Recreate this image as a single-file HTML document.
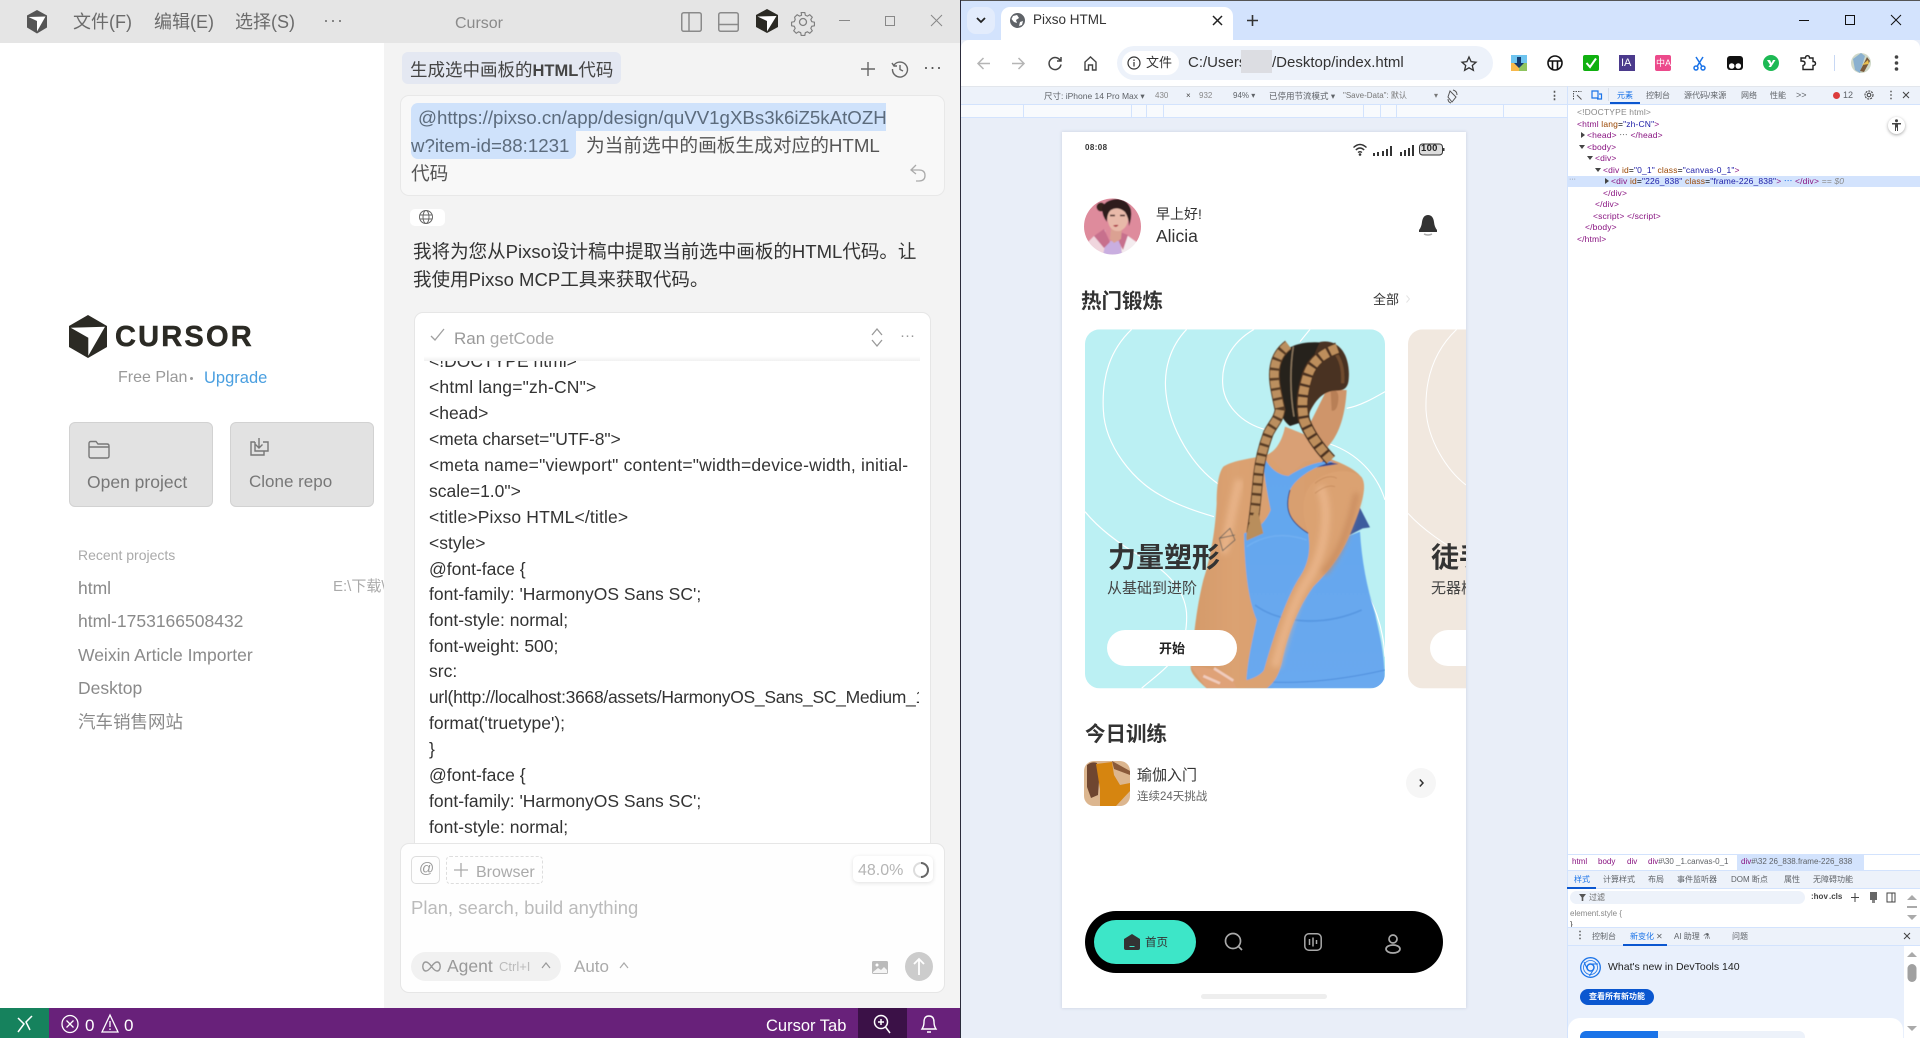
<!DOCTYPE html>
<html lang="zh-CN"><head><meta charset="utf-8"><title>Cursor and Pixso HTML</title>
<style>
*{box-sizing:border-box}
html,body{margin:0;padding:0;width:1920px;height:1038px;overflow:hidden;background:#fff;font-family:"Liberation Sans","Noto Sans CJK SC",sans-serif}
.b{position:absolute}
.t{position:absolute;white-space:nowrap;line-height:20px;height:20px;margin-top:-10px}
svg{position:absolute;overflow:visible}
.code .t{font-size:17.5px;color:#333;left:0}
.el .t{font-size:8.5px;letter-spacing:.15px}
.tg{color:#881280}.an{color:#994500}.av{color:#1a1aa6}
.dt .t{font-size:8px;color:#5f6368}
</style></head><body>

<!-- ================= LEFT WINDOW ================= -->
<div class="b" style="left:0;top:0;width:960px;height:43px;background:#e5e5e5"></div>
<div class="b" style="left:0;top:43px;width:384px;height:965px;background:#fff"></div>
<div class="b" style="left:384px;top:43px;width:576px;height:965px;background:#f3f3f3"></div>

<svg style="left:26px;top:10px" width="22" height="24" viewBox="0 0 22 24"><path d="M11 0L21 5.500V17.500L11 23.500L1 17.500V5.500Z" fill="#555"/><path d="M2.500 7L19.500 6.500L11 21.500V11Z" fill="#fff"/></svg>
<div class="t" style="left:73px;top:22px;font-size:18px;color:#6b6b6b">文件(F)</div>
<div class="t" style="left:154px;top:22px;font-size:18px;color:#6b6b6b">编辑(E)</div>
<div class="t" style="left:235px;top:22px;font-size:18px;color:#6b6b6b">选择(S)</div>
<div class="t" style="left:323px;top:20px;font-size:18px;color:#777;letter-spacing:1px">···</div>
<div class="t" style="left:455px;top:24px;font-size:16px;color:#8a8a8a">Cursor</div>

<svg style="left:681px;top:12px" width="21" height="20" fill="none" stroke="#8a8a8a" stroke-width="1.500"><rect x=".75" y=".75" width="19.500" height="18.500" rx="2"/><path d="M8 1V19"/></svg>
<svg style="left:718px;top:12px" width="21" height="20" fill="none" stroke="#8a8a8a" stroke-width="1.500"><rect x=".75" y=".75" width="19.500" height="18.500" rx="2"/><path d="M1 12.500H20"/></svg>
<svg style="left:756px;top:9px" width="22" height="24"><path d="M11 0L22 6V18L11 24L0 18V6Z" fill="#2b2a24"/><path d="M1.500 7.500L20.500 7L11 22.500V12Z" fill="#fff"/></svg>
<svg style="left:791px;top:10px" width="24" height="24" viewBox="0 0 24 24" fill="none" stroke="#808080" stroke-width="1.300"><circle cx="12" cy="12" r="3.500"/><path d="M10 1.500h4l.6 3 2.300 1 2.600-1.600 2.800 2.800-1.600 2.600 1 2.300 3 .6v4l-3 .6-1 2.300 1.600 2.600-2.800 2.800-2.600-1.600-2.300 1-.6 3h-4l-.6-3-2.300-1-2.600 1.600-2.800-2.800 1.600-2.600-1-2.300-3-.6v-4l3-.6 1-2.300L2.700 6.700l2.800-2.800 2.600 1.600 2.300-1z" transform="translate(1.200 1.200) scale(.9)"/></svg>
<div class="b" style="left:839px;top:20px;width:11px;height:1px;background:#888"></div>
<div class="b" style="left:885px;top:16px;width:10px;height:10px;border:1px solid #888"></div>
<svg style="left:931px;top:15px" width="11" height="11" stroke="#888" stroke-width="1"><path d="M0 0L11 11M11 0L0 11"/></svg>

<!-- sidebar -->
<svg style="left:69px;top:315px" width="38" height="43" viewBox="69 315 38 43"><path d="M88 315L107 326V347L88 358L69 347V326Z" fill="#2b2a24"/><path d="M70.700 327.700L105 326.700L88.300 355.700V337.700Z" fill="#fff"/></svg>
<div class="t" style="left:115px;top:337px;font-size:29px;font-weight:700;color:#2b2a24;letter-spacing:2.200px;-webkit-text-stroke:.5px #2b2a24">CURSOR</div>
<div class="t" style="left:118px;top:378px;font-size:16px;color:#999">Free Plan</div>
<div class="b" style="left:190px;top:377px;width:3px;height:3px;border-radius:50%;background:#999"></div>
<div class="t" style="left:204px;top:378px;font-size:16.500px;color:#4a9fe0">Upgrade</div>

<div class="b" style="left:69px;top:422px;width:144px;height:85px;background:#e2e2e2;border:1px solid #d2d2d2;border-radius:6px"></div>
<div class="b" style="left:230px;top:422px;width:144px;height:85px;background:#e2e2e2;border:1px solid #d2d2d2;border-radius:6px"></div>
<svg style="left:88px;top:440px" width="22" height="20" fill="none" stroke="#777" stroke-width="1.400"><path d="M1 3.500Q1 1.500 3 1.500H8L10 4H19Q21 4 21 6V16Q21 18 19 18H3Q1 18 1 16ZM1 7H21"/></svg>
<svg style="left:249px;top:437px" width="21" height="24" fill="none" stroke="#777" stroke-width="1.400"><path d="M6 5H2V18H15V14M6 5V14H15M15 14H19V5H14"/><path d="M10 1V11M6.500 7.500L10 11L13.500 7.500"/></svg>
<div class="t" style="left:87px;top:482px;font-size:17.500px;color:#777">Open project</div>
<div class="t" style="left:249px;top:482px;font-size:17px;color:#777">Clone repo</div>

<div class="t" style="left:78px;top:555px;font-size:14px;color:#aaa">Recent projects</div>
<div class="t" style="left:78px;top:588px;font-size:17.5px;color:#8a8a8a">html</div>
<div class="t" style="left:78px;top:621px;font-size:17.5px;color:#8a8a8a">html-1753166508432</div>
<div class="t" style="left:78px;top:655px;font-size:17.5px;color:#8a8a8a">Weixin Article Importer</div>
<div class="t" style="left:78px;top:688px;font-size:17.5px;color:#8a8a8a">Desktop</div>
<div class="t" style="left:78px;top:722px;font-size:17.5px;color:#8a8a8a">汽车销售网站</div>
<div class="b" style="left:333px;top:575px;width:51px;height:24px;overflow:hidden"><div class="t" style="left:0;top:12px;font-size:15px;color:#aaa">E:\下载\</div></div>

<!-- chat head -->
<div class="b" style="left:402px;top:52px;width:219px;height:32px;background:#e4e8f2;border-radius:6px"></div>
<div class="t" style="left:410px;top:70px;font-size:17.500px;color:#444">生成选中画板的<b style="font-weight:700;font-size:16.500px">HTML</b>代码</div>
<svg style="left:861px;top:62px" width="14" height="14" stroke="#666" stroke-width="1.400"><path d="M7 0V14M0 7H14"/></svg>
<svg style="left:891px;top:60px" width="18" height="18" fill="none" stroke="#666" stroke-width="1.400"><path d="M3 5A7.500 7.500 0 1 1 1.500 9M1 3L3 6H6M9 5V9.500L12 11"/></svg>
<div class="t" style="left:923px;top:67px;font-size:18px;color:#555;letter-spacing:.5px">···</div>

<div class="b" style="left:400px;top:95px;width:545px;height:101px;background:#f8f8f8;border:1px solid #e8e8e8;border-radius:9px"></div>
<div class="b" style="left:411px;top:103px;width:475px;height:28px;background:#cfe2fb;border-radius:7px 0 0 0"></div>
<div class="b" style="left:411px;top:131px;width:165px;height:28px;background:#cfe2fb;border-radius:0 0 7px 7px"></div>
<div class="t" style="left:418px;top:118px;font-size:18.700px;color:#5c6b7c">@https://pixso.cn/app/design/quVV1gXBs3k6iZ5kAtOZH</div>
<div class="t" style="left:411px;top:146px;font-size:18.700px;color:#5c6b7c">w?item-id=88:1231</div>
<div class="t" style="left:586px;top:146px;font-size:18.700px;color:#555">为当前选中的画板生成对应的HTML</div>
<div class="t" style="left:411px;top:174px;font-size:18.700px;color:#555">代码</div>
<svg style="left:910px;top:164px" width="17" height="18" fill="none" stroke="#aaa" stroke-width="1.300"><path d="M6 1L1 6L6 10M1 6H9Q15 6 15 11.500Q15 17 9 17H6"/></svg>

<div class="b" style="left:410px;top:209px;width:35px;height:17px;background:#fff;border-radius:5px"></div>
<svg style="left:419px;top:210px" width="14" height="14" fill="none" stroke="#666" stroke-width="1"><circle cx="7" cy="7" r="6.500"/><ellipse cx="7" cy="7" rx="3" ry="6.500"/><path d="M.5 5H13.500M.5 9H13.500"/></svg>

<div class="t" style="left:413px;top:252px;font-size:18.550px;color:#333">我将为您从Pixso设计稿中提取当前选中画板的HTML代码。让</div>
<div class="t" style="left:413px;top:280px;font-size:18.550px;color:#333">我使用Pixso MCP工具来获取代码。</div>

<!-- tool card -->
<div class="b" style="left:414px;top:312px;width:517px;height:560px;background:#fff;border:1px solid #e6e6e6;border-radius:9px"></div>
<svg style="left:430px;top:328px" width="15" height="13" fill="none" stroke="#a0a0a0" stroke-width="1.300"><path d="M1 8L5 12L14 1"/></svg>
<div class="t" style="left:454px;top:339px;font-size:17px;color:#999">Ran <span style="color:#aaa">getCode</span></div>
<svg style="left:871px;top:328px" width="12" height="19" fill="none" stroke="#999" stroke-width="1.300"><path d="M1 7L6 1L11 7M1 12L6 18L11 12"/></svg>
<div class="t" style="left:900px;top:336px;font-size:15px;color:#999">···</div>

<div class="b code" style="left:429px;top:361px;width:490px;height:482px;overflow:hidden">
<div class="b" style="left:0;top:-1px;width:490px">
<div class="t" style="top:1px">&lt;!DOCTYPE html&gt;</div>
<div class="t" style="top:27px;letter-spacing:.2px">&lt;html lang="zh-CN"&gt;</div>
<div class="t" style="top:53px">&lt;head&gt;</div>
<div class="t" style="top:79px;letter-spacing:-.1px">&lt;meta charset="UTF-8"&gt;</div>
<div class="t" style="top:105px;letter-spacing:.19px">&lt;meta name="viewport" content="width=device-width, initial-</div>
<div class="t" style="top:131px">scale=1.0"&gt;</div>
<div class="t" style="top:157px;letter-spacing:.15px">&lt;title&gt;Pixso HTML&lt;/title&gt;</div>
<div class="t" style="top:183px">&lt;style&gt;</div>
<div class="t" style="top:209px">@font-face {</div>
<div class="t" style="top:234px">font-family: 'HarmonyOS Sans SC';</div>
<div class="t" style="top:260px">font-style: normal;</div>
<div class="t" style="top:286px">font-weight: 500;</div>
<div class="t" style="top:311px">src:</div>
<div class="t" style="top:337px;letter-spacing:-.3px">url(http://localhost:3668/assets/HarmonyOS_Sans_SC_Medium_1</div>
<div class="t" style="top:363px">format('truetype');</div>
<div class="t" style="top:389px">}</div>
<div class="t" style="top:415px">@font-face {</div>
<div class="t" style="top:441px">font-family: 'HarmonyOS Sans SC';</div>
<div class="t" style="top:467px">font-style: normal;</div>
</div>
</div>
<div class="b" style="left:424px;top:356px;width:496px;height:5px;background:linear-gradient(#fff,#f1f1f1)"></div>

<!-- input box -->
<div class="b" style="left:400px;top:843px;width:545px;height:150px;background:#fefefe;border:1px solid #e6e6e6;border-radius:9px"></div>
<div class="b" style="left:411px;top:856px;width:29px;height:28px;border:1px solid #ddd;border-radius:5px"></div>
<div class="t" style="left:419px;top:869px;font-size:15px;color:#999">@</div>
<div class="b" style="left:446px;top:856px;width:97px;height:28px;border:1px dashed #ddd;border-radius:4px"></div>
<svg style="left:454px;top:863px" width="14" height="14" stroke="#aaa" stroke-width="1.300"><path d="M7 0V14M0 7H14"/></svg>
<div class="t" style="left:476px;top:873px;font-size:16px;color:#aaa">Browser</div>
<div class="b" style="left:853px;top:856px;width:80px;height:26px;background:#fff;border-radius:5px;box-shadow:0 1px 4px rgba(0,0,0,.12)"></div>
<div class="t" style="left:858px;top:871px;font-size:16px;color:#b5b5b5">48.0%</div>
<svg style="left:912px;top:861px" width="18" height="18" fill="none" stroke-width="2"><circle cx="9" cy="9" r="7" stroke="#ddd"/><path d="M9 2A7 7 0 0 1 9 16" stroke="#666"/></svg>
<div class="t" style="left:411px;top:908px;font-size:18.500px;color:#bbb">Plan, search, build anything</div>
<div class="b" style="left:411px;top:952px;width:150px;height:29px;background:#f1f1f1;border-radius:15px"></div>
<svg style="left:422px;top:961px" width="19" height="11" fill="none" stroke="#999" stroke-width="1.400"><path d="M9.500 5.500C7 2 5.500 1 3.800 1C2 1 .8 3 .8 5.500C.8 8 2 10 3.800 10C5.500 10 7 9 9.500 5.500C12 2 13.500 1 15.200 1C17 1 18.200 3 18.200 5.500C18.200 8 17 10 15.200 10C13.500 10 12 9 9.500 5.500Z"/></svg>
<div class="t" style="left:447px;top:966px;font-size:17.500px;color:#999">Agent</div>
<div class="t" style="left:499px;top:967px;font-size:13px;color:#bbb">Ctrl+I</div>
<svg style="left:541px;top:962px" width="10" height="7" fill="none" stroke="#999" stroke-width="1.200"><path d="M1 6L5 1L9 6"/></svg>
<div class="t" style="left:574px;top:967px;font-size:17px;color:#aaa">Auto</div>
<svg style="left:619px;top:962px" width="10" height="7" fill="none" stroke="#aaa" stroke-width="1.200"><path d="M1 6L5 1L9 6"/></svg>
<svg style="left:872px;top:961px" width="16" height="13"><rect width="16" height="13" rx="1.500" fill="#bbb"/><circle cx="5" cy="4" r="1.500" fill="#fff"/><path d="M1 11L6 7L9 9L12 6L15 9V12H1Z" fill="#f5f5f5"/></svg>
<div class="b" style="left:905px;top:952px;width:28px;height:29px;border-radius:50%;background:#ccc"></div>
<svg style="left:913px;top:958px" width="12" height="17" fill="none" stroke="#fff" stroke-width="1.800"><path d="M6 17V1M1 6L6 1L11 6"/></svg>

<!-- status bar -->
<div class="b" style="left:0;top:1008px;width:960px;height:30px;background:#68217a"></div>
<div class="b" style="left:0;top:1008px;width:49px;height:30px;background:#16825d"></div>
<svg style="left:17px;top:1015px" width="16" height="18" fill="none" stroke="#fff" stroke-width="1.500"><path d="M1 3L7 9L1 17M15 1L9 7L13 15"/></svg>
<svg style="left:61px;top:1014px" width="18" height="20" fill="none" stroke="#fff" stroke-width="1.300"><ellipse cx="9" cy="10" rx="8" ry="8.500"/><path d="M5.500 6.500L12.500 13.500M12.500 6.500L5.500 13.500"/></svg>
<div class="t" style="left:85px;top:1026px;font-size:17px;color:#fff">0</div>
<svg style="left:101px;top:1014px" width="18" height="19" fill="none" stroke="#fff" stroke-width="1.300"><path d="M9 1L17 18H1ZM9 7V13M9 14.500V16"/></svg>
<div class="t" style="left:124px;top:1026px;font-size:17px;color:#fff">0</div>
<div class="t" style="left:766px;top:1026px;font-size:16.500px;color:#fff">Cursor Tab</div>
<div class="b" style="left:858px;top:1008px;width:49px;height:30px;background:#3b1147"></div>
<svg style="left:873px;top:1014px" width="18" height="20" fill="none" stroke="#fff" stroke-width="1.500"><circle cx="8" cy="8" r="6.500"/><path d="M12.500 13L17 19M8 5V11M5 8H11"/></svg>
<svg style="left:920px;top:1014px" width="18" height="20" fill="none" stroke="#fff" stroke-width="1.400"><path d="M2 15Q4 12 4 8Q4 2 9 2Q14 2 14 8Q14 12 16 15ZM7 18H11"/></svg>

<!-- ================= CHROME WINDOW ================= -->
<div class="b" style="left:960px;top:0;width:960px;height:1038px;background:#e9eef8"></div>
<div class="b" style="left:960px;top:0;width:960px;height:40px;background:#d3e3fd"></div>
<div class="b" style="left:960px;top:0;width:960px;height:1px;background:#555"></div>
<div class="b" style="left:960px;top:0;width:1px;height:1038px;background:#2c2c3c"></div>
<div class="b" style="left:967px;top:7px;width:28px;height:27px;background:#e3ecfc;border-radius:9px"></div>
<svg style="left:976px;top:17px" width="10" height="7" fill="none" stroke="#222" stroke-width="1.800"><path d="M1 1L5 5L9 1"/></svg>
<div class="b" style="left:1001px;top:7px;width:232px;height:35px;background:#fff;border-radius:9px 9px 0 0"></div>
<svg style="left:1010px;top:13px" width="15" height="15"><circle cx="7.500" cy="7.500" r="7.500" fill="#5f6368"/><path d="M3 3L7 2L9 5L6 7L7 10L4 9L1.500 6ZM10 9L13 8L12 12L9 13Z" fill="#fff"/></svg>
<div class="t" style="left:1033px;top:20px;font-size:13.500px;color:#333">Pixso HTML</div>
<svg style="left:1213px;top:16px" width="9" height="9" stroke="#222" stroke-width="1.500"><path d="M0 0L9 9M9 0L0 9"/></svg>
<svg style="left:1247px;top:15px" width="11" height="11" stroke="#333" stroke-width="1.600"><path d="M5.500 0V11M0 5.500H11"/></svg>
<div class="b" style="left:1799px;top:20px;width:10px;height:1px;background:#111"></div>
<div class="b" style="left:1845px;top:15px;width:10px;height:10px;border:1px solid #111"></div>
<svg style="left:1891px;top:15px" width="10" height="10" stroke="#111" stroke-width="1"><path d="M0 0L10 10M10 0L0 10"/></svg>

<div class="b" style="left:961px;top:40px;width:959px;height:46px;background:#fff;border-radius:8px 8px 0 0"></div>
<svg style="left:977px;top:57px" width="13" height="13" fill="none" stroke="#b5b5b5" stroke-width="1.500"><path d="M13 6.500H1M6.500 1L1 6.500L6.500 12"/></svg>
<svg style="left:1012px;top:57px" width="13" height="13" fill="none" stroke="#b5b5b5" stroke-width="1.500"><path d="M0 6.500H12M6.500 1L12 6.500L6.500 12"/></svg>
<svg style="left:1048px;top:56px" width="14" height="14" fill="none" stroke="#444" stroke-width="1.500"><path d="M12.500 5A6 6 0 1 0 13 8.500M13 1V5H9"/></svg>
<svg style="left:1084px;top:56px" width="13" height="15" fill="none" stroke="#444" stroke-width="1.400"><path d="M1 14V6L6.500 1L12 6V14H8.500V9H4.500V14Z"/></svg>
<div class="b" style="left:1117px;top:46px;width:376px;height:34px;background:#edf2fa;border-radius:17px"></div>
<div class="b" style="left:1122px;top:51px;width:57px;height:24px;background:#fff;border-radius:12px"></div>
<svg style="left:1127px;top:56px" width="14" height="14" fill="none" stroke="#333" stroke-width="1.200"><circle cx="7" cy="7" r="6"/><path d="M7 6V10.500M7 3.500V5"/></svg>
<div class="t" style="left:1146px;top:63px;font-size:13px;color:#333">文件</div>
<div class="t" style="left:1188px;top:63px;font-size:15px;color:#333">C:/Users</div>
<div class="b" style="left:1241px;top:50px;width:31px;height:23px;background:#dcdde2"></div>
<div class="t" style="left:1272px;top:63px;font-size:15px;color:#333">/Desktop/index.html</div>
<svg style="left:1461px;top:56px" width="16" height="15" fill="none" stroke="#333" stroke-width="1.300"><path d="M8 1L10.100 5.700L15 6.200L11.300 9.500L12.400 14.300L8 11.800L3.600 14.300L4.700 9.500L1 6.200L5.900 5.700Z"/></svg>

<!-- ext icons -->
<svg style="left:1511px;top:55px" width="16" height="16"><rect width="16" height="9" fill="#6ec4ef"/><rect y="8" width="8" height="8" fill="#f7b84b"/><rect x="8" y="8" width="8" height="8" fill="#8fc45f"/><path d="M6 2H10V8H13L8 13L3 8H6Z" fill="#143a6e"/></svg>
<svg style="left:1547px;top:55px" width="16" height="16" fill="none" stroke="#111" stroke-width="1.600"><circle cx="8" cy="8" r="7"/><path d="M1.500 6H14.500M5.500 6V15M10.500 6V15" /></svg>
<svg style="left:1583px;top:55px" width="16" height="16"><rect width="16" height="16" rx="2" fill="#10b010"/><path d="M3.500 8L7 12L13 3.500" fill="none" stroke="#fff" stroke-width="2"/></svg>
<div class="b" style="left:1619px;top:55px;width:16px;height:16px;background:#4b3a8c"></div>
<div class="t" style="left:1621px;top:63px;font-size:11px;color:#fff">IA</div>
<div class="b" style="left:1655px;top:55px;width:16px;height:16px;background:#ec4a8b;border-radius:2px"></div>
<div class="t" style="left:1656px;top:63px;font-size:9px;color:#fff">中A</div>
<svg style="left:1693px;top:56px" width="13" height="15" fill="none" stroke="#1a73e8" stroke-width="1.500"><circle cx="3" cy="12" r="2"/><circle cx="10" cy="12" r="2"/><path d="M4 10.500L10 1M9 10.500L3 1"/></svg>
<svg style="left:1727px;top:56px" width="16" height="14"><rect width="16" height="14" rx="3" fill="#111"/><circle cx="4.700" cy="10" r="2.800" fill="#fff"/><circle cx="11.300" cy="10" r="2.800" fill="#fff"/></svg>
<svg style="left:1763px;top:55px" width="16" height="16"><circle cx="8" cy="8" r="8" fill="#1db954"/><path d="M4 5H7L8.500 8L10 5H12.500L8 12H5.500L7 9.800Z" fill="#fff"/></svg>
<svg style="left:1800px;top:55px" width="16" height="16" fill="none" stroke="#222" stroke-width="1.400"><path d="M1 3H5.500Q5.500 .7 7.500 .7Q9.500 .7 9.500 3H13V6.500Q15.500 6.500 15.500 8.500Q15.500 10.500 13 10.500V14.500H3V10.500Q5 10 5 8Q5 6 1 6Z"/></svg>
<div class="b" style="left:1834px;top:55px;width:1px;height:16px;background:#c8d8f4"></div>
<svg style="left:1851px;top:53px" width="20" height="20"><circle cx="10" cy="10" r="10" fill="#cfd8c8"/><path d="M2 6L10 0L14 3L9 20L4 17Z" fill="#8ab0cf"/><path d="M9 18L16 4L19 8L13 19Z" fill="#7a5a3a"/><path d="M11 12L17 7L18 11Z" fill="#e8c050"/></svg>
<svg style="left:1894px;top:55px" width="5" height="16" fill="#444"><circle cx="2.500" cy="2" r="1.800"/><circle cx="2.500" cy="8" r="1.800"/><circle cx="2.500" cy="14" r="1.800"/></svg>

<!-- device toolbar -->
<div class="b" style="left:961px;top:86px;width:606px;height:18px;background:#edf2fa;border-top:1px solid #e2e6ec"></div>
<div class="b" style="left:961px;top:104px;width:606px;height:14px;background:#f8fafd;border-top:1px solid #d3e3fd;border-bottom:1px solid #d3e3fd"></div>
<div class="b" style="left:1023px;top:104px;width:1px;height:14px;background:#d3e3fd"></div>
<div class="b" style="left:1131px;top:104px;width:1px;height:14px;background:#d3e3fd"></div>
<div class="b" style="left:1146px;top:104px;width:1px;height:14px;background:#d3e3fd"></div>
<div class="b" style="left:1163px;top:104px;width:1px;height:14px;background:#d3e3fd"></div>
<div class="b" style="left:1363px;top:104px;width:1px;height:14px;background:#d3e3fd"></div>
<div class="b" style="left:1380px;top:104px;width:1px;height:14px;background:#d3e3fd"></div>
<div class="b" style="left:1396px;top:104px;width:1px;height:14px;background:#d3e3fd"></div>
<div class="b" style="left:1503px;top:104px;width:1px;height:14px;background:#d3e3fd"></div>
<div class="dt">
<div class="t" style="left:1044px;top:96px;font-size:8.500px">尺寸: iPhone 14 Pro Max ▾</div>
<div class="t" style="left:1155px;top:96px;color:#888">430</div>
<div class="t" style="left:1186px;top:96px;color:#444">×</div>
<div class="t" style="left:1199px;top:96px;color:#888">932</div>
<div class="t" style="left:1233px;top:96px">94% ▾</div>
<div class="t" style="left:1269px;top:96px;font-size:8.500px">已停用节流模式 ▾</div>
<div class="t" style="left:1343px;top:96px;color:#777">"Save-Data": 默认</div>
<div class="t" style="left:1434px;top:96px;color:#777">▾</div>
<div class="t" style="left:1549px;top:96px;font-size:11px;font-weight:700;color:#555">⋮</div>
</div>
<svg style="left:1447px;top:89px" width="11" height="15" fill="none" stroke="#555" stroke-width="1"><path d="M3 2L9 8L5 13L1 8Z"/><path d="M6 1Q10 2 10 6M1 10Q1 13 4 14"/></svg>

<!-- phone page -->
<div class="b" style="left:1062px;top:132px;width:404px;height:876px;background:#fff;box-shadow:0 0 3px rgba(120,130,160,.3)"></div>
<div class="t" style="left:1085px;top:148px;font-size:8px;font-weight:700;color:#333;letter-spacing:.4px">08:08</div>
<svg style="left:1353px;top:143px" width="92" height="13"><g fill="none" stroke="#333" stroke-width="1.400"><path d="M.5 4.500Q7-1.500 13.500 4.500M2.800 7Q7 3 11.200 7M5 9.500Q7 8 9 9.500"/></g><circle cx="7" cy="11.500" r="1.300" fill="#333"/><g fill="#333"><rect x="20" y="10" width="2" height="3"/><rect x="24" y="9" width="2" height="4"/><rect x="29" y="8" width="2" height="5"/><rect x="33" y="6" width="2" height="7"/><rect x="37" y="3" width="2" height="10"/><rect x="47" y="9" width="2" height="4"/><rect x="51" y="7" width="2" height="6"/><rect x="55" y="5" width="2" height="8"/><rect x="59" y="2" width="2" height="11"/></g><rect x="66.500" y="1" width="23" height="11" rx="3" fill="#ddd" stroke="#333"/><rect x="90" y="5" width="1.500" height="3" fill="#333"/></svg>
<div class="t" style="left:1421px;top:149px;font-size:9.500px;font-weight:700;color:#222;letter-spacing:.3px">100</div>

<!-- avatar -->
<svg style="left:1084px;top:198px" width="58" height="57" viewBox="0 0 58 57"><defs><clipPath id="av"><ellipse cx="28.500" cy="28.500" rx="28.500" ry="28"/></clipPath><filter id="av-blur" x="-10%" y="-10%" width="120%" height="120%"><feGaussianBlur stdDeviation=".5"/></filter></defs><g clip-path="url(#av)"><g filter="url(#av-blur)"><rect x="-3" y="-3" width="64" height="63" fill="#de8b9c"/><path d="M0 57V48L10 38L21 32L24 46L20 57Z" fill="#f0d6de"/><path d="M36 37L44 38L58 48V57H38Z" fill="#f4ecef"/><path d="M19 57L22 43H36L38 57Z" fill="#c9aee0"/><path d="M10 38L20 31L26 44L20 50ZM36 34L44 37L39 52L35 44Z" fill="#c76f8d"/><path d="M27 30H38L37 41L30 45L26 41Z" fill="#dba192"/><path d="M24 12Q31 8 38 11Q45 15 44 22Q43 30 36 33Q28 34 25 27Q22 19 24 12Z" fill="#e8b9a9"/><circle cx="17" cy="9" r="4.500" fill="#35201f"/><path d="M18 10Q21 2 32 1Q44 1 47 12Q48 20 45 28Q45 20 41 14Q34 8 27 12Q23 15 23 24Q18 18 18 10Z" fill="#2e1a1c"/><path d="M29 27.500Q32 26.500 34.500 27Q32 30.500 29 27.500Z" fill="#a8323f"/><path d="M26 17.500H31M36 17.500H41" stroke="#3a2020" stroke-width="1.500"/></g></g></svg>
<div class="t" style="left:1156px;top:214px;font-size:14px;color:#333">早上好!</div>
<div class="t" style="left:1156px;top:236px;font-size:17.5px;color:#333">Alicia</div>
<svg style="left:1419px;top:215px" width="18" height="21"><path d="M9 0Q14 0 15 7Q15.500 12 18 15V17H0V15Q2.500 12 3 7Q4 0 9 0Z" fill="#333"/><path d="M5 19Q9 21 13 19" stroke="#aaa" stroke-width="1.500" fill="none"/></svg>

<div class="t" style="left:1081px;top:302px;font-size:20.500px;font-weight:700;color:#333">热门锻炼</div>
<div class="t" style="left:1373px;top:300px;font-size:13px;color:#333">全部</div>
<svg style="left:1406px;top:295px" width="4" height="8" fill="none" stroke="#e4e4e4" stroke-width="1"><path d="M.5 .5L3.500 4L.5 7.500"/></svg>

<!-- card 1 + figure -->
<svg style="left:1060px;top:320px" width="420" height="380" viewBox="0 0 1260 1140">
<defs>
<clipPath id="c1"><rect x="75" y="28" width="900" height="1077" rx="44"/></clipPath>
<clipPath id="c2"><path d="M1044 28H1218V1105H1044Z"/></clipPath>
<linearGradient id="sk" x1="0" x2="1" y1="0" y2="0"><stop offset="0" stop-color="#d49a6a"/><stop offset=".25" stop-color="#dba272"/><stop offset="1" stop-color="#d69c6c"/></linearGradient>
<linearGradient id="tk" x1="0" x2="0" y1="0" y2="1"><stop offset="0" stop-color="#62a6ee"/><stop offset="1" stop-color="#6aa9ef"/></linearGradient>
<filter id="soft" x="-5%" y="-5%" width="110%" height="110%"><feGaussianBlur stdDeviation="1.500"/></filter>
<filter id="shade" x="-20%" y="-20%" width="140%" height="140%"><feGaussianBlur stdDeviation="9"/></filter>
</defs>
<rect x="1044" y="28" width="260" height="1077" rx="44" fill="#f1e8df" clip-path="url(#c2)"/>
<g clip-path="url(#c2)" fill="none" stroke="#fff" stroke-width="3"><path d="M1190 28C1125 90 1095 170 1098 270C1103 360 1160 450 1218 495"/><path d="M1044 580C1090 630 1150 670 1218 710"/></g>
<g clip-path="url(#c1)">
<rect x="75" y="28" width="900" height="1077" fill="#bbf0f3"/>
<g fill="none" stroke="#fff" stroke-width="3.500">
<path d="M215 28C150 90 125 170 130 270C135 380 220 480 300 525C350 555 410 575 462 590"/>
<path d="M380 28C330 80 310 150 318 220C330 330 400 440 475 492"/>
<path d="M582 28C510 70 485 130 488 190C490 250 540 310 620 330"/>
<path d="M750 28L720 65"/>
<path d="M860 265C900 258 940 235 975 215"/>
<path d="M810 372C890 400 950 460 975 540"/>
<path d="M75 575C120 630 190 680 260 720C330 760 380 820 380 890C380 940 370 1000 320 1040C290 1070 260 1090 245 1105"/>
<path d="M900 790C940 840 970 920 975 1010"/>
</g>
<g filter="url(#soft)">
<!-- navy undergarment -->
<path d="M893 550L930 622L908 625L850 655C880 620 890 590 893 550Z" fill="#3e5c9e"/>
<!-- back / left arm skin -->
<path d="M490 440C520 420 580 415 620 405C640 395 660 380 675 325L805 372L800 412C830 425 880 440 905 472C920 500 905 540 895 575L860 650L700 900L640 1105H440C400 1070 385 1050 395 1030C400 950 410 860 430 780C450 720 465 640 470 550C470 500 475 460 490 440Z" fill="url(#sk)"/>
<!-- hands -->
<path d="M392 1040C430 1040 470 1045 500 1070L530 1085C570 1080 610 1070 625 1050L660 1060L640 1105H440Z" fill="#dfa278"/>
<path d="M430 1068L480 1090M462 1045L520 1082" stroke="#f0ccbd" stroke-width="8" fill="none"/>
<path d="M790 422L835 432L770 442Z" fill="#2d4690"/>
<!-- tank -->
<path d="M610 405C625 440 650 465 685 468C720 445 770 420 822 425C770 435 710 470 690 510C675 560 680 600 745 640L860 650L900 635C905 720 920 800 945 880C960 950 975 1000 975 1105H558C560 1040 570 990 590 900C570 850 555 780 552 640C590 630 615 610 632 570C620 510 610 460 610 405Z" fill="url(#tk)"/>
<path d="M585 855C650 905 780 925 905 870" fill="none" stroke="#5696e0" stroke-width="5"/>
<path d="M565 1078C650 1095 800 1090 975 1050" fill="none" stroke="#4f8fdc" stroke-width="3"/>
<path d="M560 680C620 640 680 640 740 660" fill="none" stroke="#72b0f2" stroke-width="4"/>
<path d="M690 510C675 560 680 600 745 640" fill="none" stroke="#34457a" stroke-width="3"/>
<!-- right arm on top -->
<path d="M745 505C780 450 870 440 905 472C925 500 900 570 875 630C845 710 800 760 760 800C715 860 680 950 665 1030C655 1070 640 1090 620 1105L530 1105L520 1085C560 1085 600 1070 612 1050C640 950 680 830 720 770C760 710 745 650 745 640C730 600 720 550 745 505Z" fill="#dba272"/>
<path d="M780 500C810 560 800 680 750 770C700 840 670 950 645 1040" fill="none" stroke="#e8b388" stroke-width="26" filter="url(#shade)"/>
<path d="M890 520C870 620 840 700 790 760" fill="none" stroke="#c98c5e" stroke-width="16" filter="url(#shade)"/>
<path d="M765 490C790 470 815 465 830 475M765 520C790 500 810 495 825 500" fill="none" stroke="#bf8556" stroke-width="2"/>
<path d="M540 480C520 540 510 620 490 700" fill="none" stroke="#e8b388" stroke-width="26" filter="url(#shade)"/>
<!-- neck -->
<path d="M675 320L805 372L800 415L735 425L685 468C660 450 640 420 625 405C650 390 668 360 675 320Z" fill="#d9a074"/>
<!-- head skin -->
<path d="M800 210L860 210C856 280 840 340 805 378L735 340Z" fill="#cf956a"/>
<path d="M812 212Q838 205 835 240Q832 275 815 272Z" fill="#b87f56"/>
<!-- hair -->
<path d="M650 125C670 80 720 62 790 68C800 120 760 200 745 300L690 318C665 300 650 260 645 200Z" fill="#28221e"/>
<path d="M700 80C690 140 690 220 702 290" fill="none" stroke="#8f7a60" stroke-width="4"/>
<path d="M780 66C840 55 872 110 866 178C864 205 850 212 830 212C790 212 765 240 745 285C735 230 745 130 780 66Z" fill="#4a3020"/>
<path d="M820 90C845 120 850 150 848 190" fill="none" stroke="#6f4b2e" stroke-width="10"/>
<g fill="none">
<path d="M685 75C665 90 650 110 645 140C638 180 650 220 660 270C655 300 640 310 625 340C610 380 600 420 595 465C590 520 585 580 575 640" stroke="#5a3d25" stroke-width="32"/>
<path d="M685 75C665 90 650 110 645 140C638 180 650 220 660 270C655 300 640 310 625 340C610 380 600 420 595 465C590 520 585 580 575 640" stroke="#bb8f5e" stroke-width="26" stroke-dasharray="22 8"/>
<path d="M832 85C790 100 755 125 742 170C730 210 722 250 732 300C745 335 770 375 812 420" stroke="#4b3220" stroke-width="36"/>
<path d="M832 85C790 100 755 125 742 170C730 210 722 250 732 300C745 335 770 375 812 420" stroke="#bd8e5c" stroke-width="28" stroke-dasharray="24 8"/>
</g>
<path d="M592 560C596 590 606 620 610 640L560 662C555 640 570 600 592 560Z" fill="#b98e5c"/>
<path d="M510 625L478 655L488 692L525 660Z" fill="none" stroke="#5d5d5a" stroke-width="2.500"/>
<path d="M478 655L525 645" stroke="#5d5d5a" stroke-width="2.500"/>
</g>
</g>
</svg>
<div class="t" style="left:1108px;top:558px;font-size:28px;font-weight:700;color:#333">力量塑形</div>
<div class="t" style="left:1107px;top:589px;font-size:15px;color:#444">从基础到进阶</div>
<div class="b" style="left:1107px;top:630px;width:130px;height:36px;border-radius:18px;background:#fff"></div>
<div class="t" style="left:1159px;top:649px;font-size:13px;font-weight:700;color:#222">开始</div>
<div class="b" style="left:1408px;top:540px;width:58px;height:130px;overflow:hidden">
<div class="t" style="left:23px;top:18px;font-size:28px;font-weight:700;color:#333">徒手</div>
<div class="t" style="left:23px;top:49px;font-size:15px;color:#444">无器械</div>
<div class="b" style="left:22px;top:90px;width:130px;height:36px;border-radius:18px;background:#fff"></div>
</div>

<div class="t" style="left:1085px;top:735px;font-size:20.500px;font-weight:700;color:#333">今日训练</div>
<svg style="left:1084px;top:761px" width="46" height="45" viewBox="0 0 46 45"><defs><clipPath id="th"><rect width="46" height="45" rx="10"/></clipPath></defs><g clip-path="url(#th)"><rect width="46" height="45" fill="#dcb68f"/><path d="M3 4Q8 0 13 2L15 20L14 34L7 37L3 26Z" fill="#6f4630"/><path d="M12 3L28 1L30 14L36 24L46 22V30L32 45H16L16 28Z" fill="#d68510"/><path d="M28 0L46 10V14L30 8Z" fill="#8a5a3a"/></g></svg>
<div class="t" style="left:1137px;top:776px;font-size:15px;color:#333">瑜伽入门</div>
<div class="t" style="left:1137px;top:797px;font-size:11.500px;color:#666">连续24天挑战</div>
<div class="b" style="left:1406px;top:768px;width:30px;height:30px;border-radius:50%;background:#f6f6f6"></div>
<svg style="left:1419px;top:779px" width="5" height="8" fill="none" stroke="#333" stroke-width="1.500"><path d="M.8 .5L4 4L.8 7.500"/></svg>

<!-- nav -->
<div class="b" style="left:1085px;top:911px;width:358px;height:62px;border-radius:31px;background:#000"></div>
<div class="b" style="left:1094px;top:920px;width:102px;height:44px;border-radius:22px;background:#3de6c8"></div>
<svg style="left:1124px;top:934px" width="16" height="16"><path d="M8 0L16 5V14Q16 16 14 16H2Q0 16 0 14V5Z" fill="#333"/><rect x="5.500" y="12" width="5" height="1" fill="#3de6c8"/></svg>
<div class="t" style="left:1145px;top:943px;font-size:11.500px;color:#333">首页</div>
<svg style="left:1225px;top:933px" width="18" height="18" fill="none" stroke="#a9a9a9" stroke-width="1.700"><circle cx="8" cy="8" r="7.500"/><path d="M13 13L17 17"/></svg>
<svg style="left:1304px;top:933px" width="18" height="18" fill="none" stroke="#a9a9a9" stroke-width="1.500"><rect x=".8" y=".8" width="16.400" height="16.400" rx="4"/><path d="M5.500 6V12M9 4.500V13.500M12.500 7V11"/></svg>
<svg style="left:1385px;top:934px" width="16" height="20" fill="none" stroke="#a9a9a9" stroke-width="1.700"><circle cx="8" cy="5" r="4"/><ellipse cx="8" cy="15" rx="7" ry="4"/></svg>
<div class="b" style="left:1201px;top:994px;width:126px;height:5px;border-radius:3px;background:#eee"></div>

<!-- ================= DEVTOOLS ================= -->
<div class="b" style="left:1567px;top:86px;width:353px;height:952px;background:#fff;border-left:1px solid #d3e3fd"></div>
<div class="b" style="left:1568px;top:86px;width:352px;height:19px;background:#edf2fa;border-top:1px solid #e2e6ec;border-bottom:1px solid #d3e3fd"></div>
<svg style="left:1573px;top:91px" width="9" height="9" fill="none" stroke="#555" stroke-width="1" stroke-dasharray="1.500 1"><path d="M.5 8.500V.5H8.500"/><path d="M4 4L8.500 8.500" stroke-dasharray="none"/></svg>
<svg style="left:1591px;top:90px" width="11" height="10" fill="none" stroke="#1a73e8" stroke-width="1.200"><path d="M1 8V1H7V8ZM8 4H10.500V9H6"/></svg>
<div class="b" style="left:1608px;top:88px;width:1px;height:13px;background:#d8dfea"></div>
<div class="dt">
<div class="t" style="left:1617px;top:96px;color:#1a73e8">元素</div>
<div class="t" style="left:1646px;top:96px">控制台</div>
<div class="t" style="left:1684px;top:96px">源代码/来源</div>
<div class="t" style="left:1741px;top:96px">网络</div>
<div class="t" style="left:1770px;top:96px">性能</div>
<div class="t" style="left:1796px;top:95px;font-size:9px">&gt;&gt;</div>
<div class="t" style="left:1843px;top:95px;font-size:9px">12</div>
<div class="t" style="left:1886px;top:96px;font-size:10px;font-weight:700;color:#555">⋮</div>
</div>
<div class="b" style="left:1610px;top:102px;width:30px;height:2px;background:#0b57d0"></div>
<div class="b" style="left:1833px;top:92px;width:7px;height:7px;border-radius:50%;background:#dc3c3c"></div>
<svg style="left:1864px;top:90px" width="10" height="10" fill="none" stroke="#444" stroke-width="1.100"><circle cx="5" cy="5" r="1.800"/><circle cx="5" cy="5" r="4" stroke-dasharray="2 1"/></svg>
<svg style="left:1903px;top:92px" width="6" height="6" stroke="#444" stroke-width="1"><path d="M0 0L6 6M6 0L0 6"/></svg>

<div class="b" style="left:1568px;top:176px;width:352px;height:11px;background:#d3e3fd"></div>
<div class="el">
<div class="t" style="left:1577px;top:112px;color:#888">&lt;!DOCTYPE html&gt;</div>
<div class="t" style="left:1577px;top:124px"><span class="tg">&lt;html</span> <span class="an">lang</span>=<span class="av">"zh-CN"</span><span class="tg">&gt;</span></div>
<div class="t" style="left:1587px;top:135px"><span class="tg">&lt;head&gt;</span> <span style="color:#777">⋯</span> <span class="tg">&lt;/head&gt;</span></div>
<div class="t" style="left:1587px;top:147px"><span class="tg">&lt;body&gt;</span></div>
<div class="t" style="left:1595px;top:158px"><span class="tg">&lt;div&gt;</span></div>
<div class="t" style="left:1603px;top:170px"><span class="tg">&lt;div</span> <span class="an">id</span>=<span class="av">"0_1"</span> <span class="an">class</span>=<span class="av">"canvas-0_1"</span><span class="tg">&gt;</span></div>
<div class="t" style="left:1611px;top:181px"><span class="tg">&lt;div</span> <span class="an">id</span>=<span class="av">"226_838"</span> <span class="an">class</span>=<span class="av">"frame-226_838"</span><span class="tg">&gt;</span> <span style="color:#1a73e8">⋯</span> <span class="tg">&lt;/div&gt;</span> <span style="color:#888;font-style:italic">== $0</span></div>
<div class="t" style="left:1603px;top:193px"><span class="tg">&lt;/div&gt;</span></div>
<div class="t" style="left:1595px;top:204px"><span class="tg">&lt;/div&gt;</span></div>
<div class="t" style="left:1593px;top:216px"><span class="tg">&lt;script&gt;</span> <span class="tg">&lt;/script&gt;</span></div>
<div class="t" style="left:1585px;top:227px"><span class="tg">&lt;/body&gt;</span></div>
<div class="t" style="left:1577px;top:239px"><span class="tg">&lt;/html&gt;</span></div>
</div>
<svg style="left:1580px;top:131px" width="30" height="55" fill="#444"><path d="M0 0L4 3L0 6Z" transform="translate(1 1)"/><path d="M0 0L6 0L3 4Z" transform="translate(-1 14)"/><path d="M0 0L6 0L3 4Z" transform="translate(7 25)"/><path d="M0 0L6 0L3 4Z" transform="translate(15 37)"/><path d="M0 0L4 3L0 6Z" transform="translate(25 47)"/></svg>
<div class="t" style="left:1569px;top:180px;font-size:7px;color:#777">···</div>
<div class="b" style="left:1888px;top:117px;width:17px;height:17px;border-radius:50%;background:#fff;box-shadow:0 1px 3px rgba(0,0,0,.35)"></div>
<svg style="left:1892px;top:119px" width="9" height="12" fill="#444"><circle cx="4.500" cy="1.800" r="1.500"/><path d="M0 4H9V5.500H6V12H5V8.500H4V12H3V5.500H0Z"/></svg>

<!-- lower devtools -->
<div class="b" style="left:1568px;top:854px;width:352px;height:1px;background:#d3e3fd"></div>
<div class="b" style="left:1737px;top:855px;width:127px;height:15px;background:#d3e3fd"></div>
<div class="b" style="left:1568px;top:870px;width:352px;height:19px;background:#edf2fa;border-top:1px solid #d3e3fd;border-bottom:1px solid #d3e3fd"></div>
<div class="dt">
<div class="t" style="left:1572px;top:862px;color:#881280">html</div>
<div class="t" style="left:1598px;top:862px;color:#881280">body</div>
<div class="t" style="left:1627px;top:862px;color:#881280">div</div>
<div class="t" style="left:1648px;top:862px"><span style="color:#881280">div</span>#\30 _1.canvas-0_1</div>
<div class="t" style="left:1741px;top:862px"><span style="color:#881280">div</span>#\32 26_838.frame-226_838</div>
<div class="t" style="left:1574px;top:880px;color:#1a73e8">样式</div>
<div class="t" style="left:1603px;top:880px">计算样式</div>
<div class="t" style="left:1648px;top:880px">布局</div>
<div class="t" style="left:1677px;top:880px">事件监听器</div>
<div class="t" style="left:1731px;top:880px">DOM 断点</div>
<div class="t" style="left:1784px;top:880px">属性</div>
<div class="t" style="left:1813px;top:880px">无障碍功能</div>
</div>
<div class="b" style="left:1567px;top:887px;width:29px;height:2px;background:#0b57d0"></div>
<div class="b" style="left:1570px;top:891px;width:235px;height:13px;border-radius:7px;background:#edf2fa"></div>
<svg style="left:1579px;top:894px" width="7" height="7" fill="#555"><path d="M0 0H7L4.300 3.500V7H2.700V3.500Z"/></svg>
<div class="dt">
<div class="t" style="left:1589px;top:898px;color:#666">过滤</div>
<div class="t" style="left:1811px;top:897px;font-weight:700;color:#444">:hov</div>
<div class="t" style="left:1829px;top:897px;font-weight:700;color:#444">.cls</div>
</div>
<svg style="left:1850px;top:892px" width="52" height="11" fill="none" stroke="#444" stroke-width="1"><path d="M5 1V10M1 5.500H9"/><rect x="20" y="0" width="7" height="8" fill="#666" stroke="none"/><rect x="22" y="8" width="3" height="3" fill="#888" stroke="none"/><rect x="37" y="1" width="8" height="9"/><path d="M42 1V10"/></svg>
<div class="b" style="left:1905px;top:889px;width:15px;height:38px;background:#fff"></div>
<svg style="left:1906px;top:895px" width="12" height="30" fill="#aaa"><path d="M1 5L6 0L11 5Z"/><rect x="1" y="11" width="10" height="2"/><path d="M1 20L6 25L11 20Z"/></svg>
<div class="t" style="left:1570px;top:914px;font-size:8px;color:#888">element.style {</div>
<div class="t" style="left:1570px;top:925px;font-size:8px;color:#444">}</div>

<div class="b" style="left:1568px;top:927px;width:352px;height:111px;background:#e9f0fc"></div>
<div class="b" style="left:1568px;top:927px;width:352px;height:19px;background:#edf2fa;border-top:1px solid #d3e3fd;border-bottom:1px solid #d3e3fd"></div>
<div class="dt">
<div class="t" style="left:1575px;top:936px;font-size:10px;font-weight:700;color:#555">⋮</div>
<div class="t" style="left:1592px;top:937px">控制台</div>
<div class="t" style="left:1630px;top:937px;color:#1a73e8">新变化</div>
<div class="t" style="left:1656px;top:937px">✕</div>
<div class="t" style="left:1674px;top:937px">AI 助理</div>
<div class="t" style="left:1703px;top:937px">⚗</div>
<div class="t" style="left:1732px;top:937px">问题</div>
</div>
<div class="b" style="left:1623px;top:944px;width:44px;height:2px;background:#0b57d0"></div>
<svg style="left:1904px;top:933px" width="6" height="6" stroke="#444" stroke-width="1"><path d="M0 0L6 6M6 0L0 6"/></svg>
<svg style="left:1580px;top:957px" width="21" height="21" fill="none" stroke="#1a73e8"><circle cx="10.500" cy="10.500" r="9.800" stroke-width="1.300"/><circle cx="10.500" cy="10.500" r="7" stroke-width=".8"/><circle cx="10.500" cy="10.500" r="3.500" stroke-width="1.500"/><path d="M10.500 7H18M7.500 12.500L4 5M13.500 12.500L9.500 19" stroke-width="1"/></svg>
<div class="t" style="left:1608px;top:967px;font-size:10.500px;color:#222">What's new in DevTools 140</div>
<div class="b" style="left:1580px;top:989px;width:74px;height:16px;border-radius:8px;background:#0b57d0"></div>
<div class="t" style="left:1589px;top:997px;font-size:8px;color:#fff;font-weight:700">查看所有新功能</div>
<div class="b" style="left:1568px;top:1018px;width:335px;height:20px;background:#fff;border-radius:12px 12px 0 0"></div>
<div class="b" style="left:1580px;top:1031px;width:78px;height:7px;background:#1a73e8;border-radius:6px 0 0 0"></div>
<div class="b" style="left:1658px;top:1031px;width:147px;height:7px;background:#edf2fa;border-radius:0 6px 0 0"></div>
<div class="b" style="left:1904px;top:946px;width:16px;height:92px;background:#fff"></div>
<svg style="left:1906px;top:952px" width="12" height="84" fill="#aaa"><path d="M1 5L6 0L11 5Z"/><rect x="1.500" y="12" width="9" height="18" rx="4.500" fill="#a0a0a0"/><path d="M1 74L6 79L11 74Z"/></svg>

</body></html>
